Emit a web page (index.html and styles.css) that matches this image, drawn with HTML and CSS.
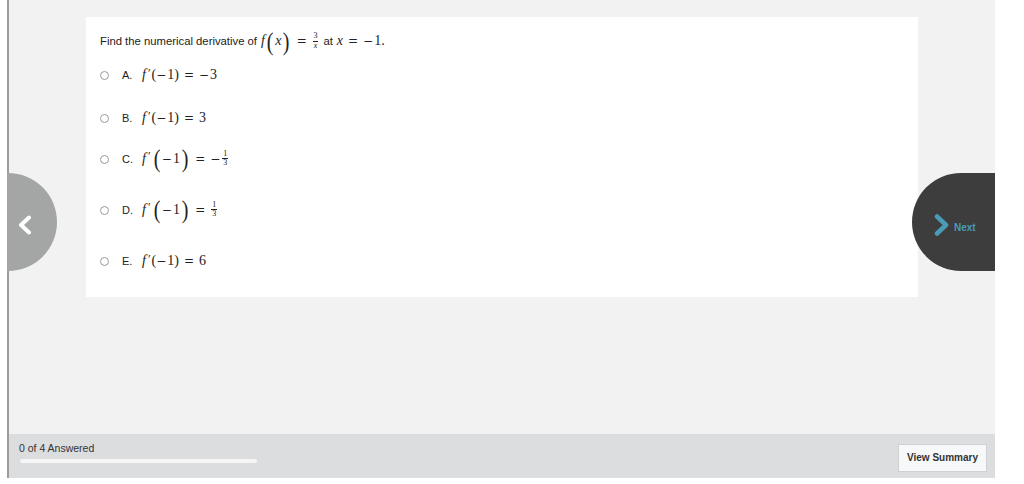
FILE: index.html
```html
<!DOCTYPE html>
<html lang="en">
<head>
  <meta charset="UTF-8">
  <title>Question</title>
  <link rel="stylesheet" href="styles.css">
</head>
<body>

  <div class="stage">
    <div class="main">
      <!-- Question card -->
      <div class="card">
        <div class="question">
          <span>Find the numerical derivative of</span>
          <span class="math">
            <i>f</i><span class="big">(</span><i>x</i><span class="big">)</span>
            <span class="op">=</span>
            <span class="frac"><span>3</span><span class="den"><i>x</i></span></span>
          </span>
          <span>at</span>
          <span class="math"><i>x</i><span class="op">=</span><span class="minus">&minus;</span>1.</span>
        </div>

        <div class="opt">
          <span class="radio"></span><span class="letter">A.</span>
          <span class="math"><i>f</i><span class="prime">&prime;</span>(<span class="minus">&minus;</span>1)<span class="op">=</span><span class="minus">&minus;</span>3</span>
        </div>

        <div class="opt">
          <span class="radio"></span><span class="letter">B.</span>
          <span class="math"><i>f</i><span class="prime">&prime;</span>(<span class="minus">&minus;</span>1)<span class="op">=</span>3</span>
        </div>

        <div class="opt tall">
          <span class="radio"></span><span class="letter">C.</span>
          <span class="math">
            <i>f</i><span class="prime">&prime;</span><span class="big">(</span><span class="minus">&minus;</span>1<span class="big">)</span><span class="op">=</span><span class="minus">&minus;</span><span class="frac"><span>1</span><span class="den">3</span></span>
          </span>
        </div>

        <div class="opt tall after-tall">
          <span class="radio"></span><span class="letter">D.</span>
          <span class="math">
            <i>f</i><span class="prime">&prime;</span><span class="big">(</span><span class="minus">&minus;</span>1<span class="big">)</span><span class="op">=</span><span class="frac"><span>1</span><span class="den">3</span></span>
          </span>
        </div>

        <div class="opt last">
          <span class="radio"></span><span class="letter">E.</span>
          <span class="math"><i>f</i><span class="prime">&prime;</span>(<span class="minus">&minus;</span>1)<span class="op">=</span>6</span>
        </div>
      </div>

      <!-- Navigation -->
      <div class="nav-prev">
        <svg width="14" height="20" viewBox="0 0 14 20">
          <polyline points="11,2.5 3,10 11,17.5" fill="none" stroke="#fff" stroke-width="4" stroke-linecap="round" stroke-linejoin="round"/>
        </svg>
      </div>
      <div class="nav-next">
        <svg width="16" height="22" viewBox="0 0 16 22">
          <polyline points="3,2.5 12,11 3,19.5" fill="none" stroke="#4b9bb6" stroke-width="4.5" stroke-linecap="round" stroke-linejoin="round"/>
        </svg>
        <span>Next</span>
      </div>
    </div>

    <div class="footer">
      <div class="progress">
        <div class="progress-label">0 of 4 Answered</div>
        <div class="progress-bar"></div>
      </div>
      <button class="summary">View Summary</button>
    </div>
  </div>

</body>
</html>
```

FILE: styles.css
```css
* {
  box-sizing: border-box;
}

body {
  margin: 0;
  background-color: #fff;
  font-family: "Liberation Sans", Arial, sans-serif;
  color: #222;
}

.stage {
  margin-left: 7px;
  width: 988px;
  height: 478px;
  border-left: 2px solid #9c9c9c;
  background-color: #f2f2f2;
  display: flex;
  flex-direction: column;
}

.main {
  position: relative;
  height: 434px;
  padding-top: 17px;
}

.card {
  margin-left: 77px;
  width: 832px;
  height: 280px;
  background-color: #fff;
  padding: 11px 14px 0 14px;
  font-size: 11.3px;
}

.question {
  display: flex;
  align-items: center;
  gap: 4px;
  height: 26px;
}

.math {
  font-family: "Liberation Serif", "Times New Roman", serif;
  font-size: 14px;
  display: inline-flex;
  align-items: center;
  white-space: nowrap;
}

.math i {
  font-family: "Liberation Serif", serif;
  font-style: italic;
}

.prime {
  margin-left: 2px;
  margin-right: 1px;
  font-size: 12px;
  position: relative;
  top: -2px;
}

.op {
  font-family: "DejaVu Serif", serif;
  font-size: 12px;
  margin: 0 5px;
}

.minus {
  font-family: "DejaVu Serif", serif;
  font-size: 12px;
  margin-right: 1px;
}

.big {
  font-size: 25px;
  line-height: 1;
  transform: scaleX(0.8);
  margin: 0 1px;
}

.frac {
  display: inline-flex;
  flex-direction: column;
  align-items: center;
  font-size: 8px;
  line-height: 1.05;
  margin: 0 1px;
}

.den {
  border-top: 1px solid #222;
  padding: 0 1px;
}

.opt {
  display: flex;
  align-items: center;
  height: 30px;
  margin-top: 13px;
}

.card .opt:nth-child(2) {
  margin-top: 6px;
}

.opt.tall {
  margin-top: 11px;
  align-items: flex-start;
  padding-top: 9px;
}

.opt.after-tall {
  margin-top: 21px;
}

.opt.last {
  margin-top: 21px;
}

.opt.tall .math {
  margin-top: -7px;
}

.radio {
  width: 9px;
  height: 9px;
  border: 1px solid #9a9a9a;
  border-radius: 50%;
  flex: none;
}

.opt.tall .radio {
  margin-top: 2px;
}

.letter {
  margin-left: 13px;
  width: 20px;
  font-size: 11px;
}

.nav-prev {
  position: absolute;
  left: -2px;
  top: 173px;
  width: 50px;
  height: 98px;
  border-radius: 0 49px 49px 0;
  background-color: #a4a6a6;
  display: flex;
  align-items: center;
  padding-left: 11px;
  padding-top: 6px;
}

.nav-next {
  position: absolute;
  right: 0;
  top: 173px;
  width: 83px;
  height: 98px;
  border-radius: 49px 0 0 49px;
  background-color: #3d3d3d;
  display: flex;
  align-items: center;
  padding-left: 22px;
  padding-top: 5px;
  gap: 4px;
}

.nav-next span {
  color: #4b9bb6;
  font-weight: bold;
  font-size: 10px;
  padding-top: 6px;
}

.footer {
  height: 44px;
  background-color: #dcdddf;
  display: flex;
  align-items: center;
  justify-content: space-between;
  padding: 0 8px 0 10px;
}

.progress {
  padding-bottom: 4px;
}

.progress-label {
  font-size: 10.5px;
  color: #333;
  margin-bottom: 5px;
  margin-top: -3px;
}

.progress-bar {
  width: 237px;
  height: 4px;
  margin-left: 1px;
  border-radius: 2px;
  background-color: #f6f6f6;
}

.summary {
  width: 89px;
  height: 28px;
  margin-top: 3px;
  background-color: #f7f8f9;
  border: 1px solid #cfd0d2;
  font-family: "Liberation Sans", Arial, sans-serif;
  font-weight: bold;
  font-size: 10px;
  color: #333;
  padding: 0;
}
```
